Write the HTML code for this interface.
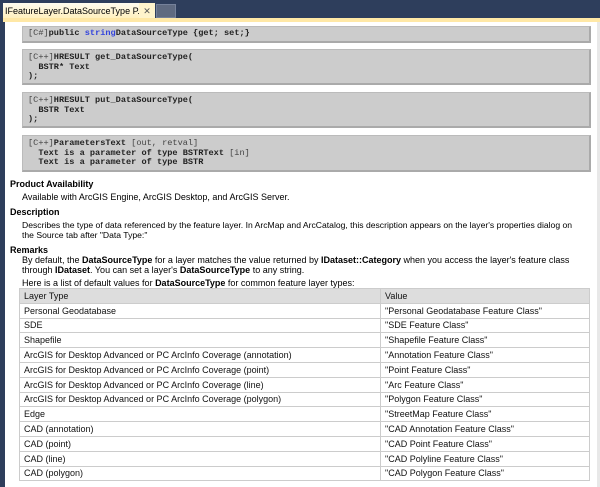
<!DOCTYPE html>
<html><head><style>
*{margin:0;padding:0;box-sizing:border-box}
body{width:600px;height:487px;background:#2e3e5c;position:relative;overflow:hidden;font-family:"Liberation Sans",sans-serif;font-size:9px;color:#000}
.tab{position:absolute;left:3px;top:3px;width:152px;height:17px;background:linear-gradient(#fffcef,#ffefb8);font-size:9px;line-height:17px;padding-left:2px;color:#000;white-space:nowrap;overflow:hidden}
.tab span{position:absolute;right:0;top:0;width:16px;text-align:center;color:#555;font-size:9px;background:#fff4cc}
.tab2{position:absolute;left:156px;top:4px;width:20px;height:14px;background:#5f6a80;border:1px solid #75819a}
.strip{position:absolute;left:3px;top:18px;width:597px;height:4px;background:#ffe8a6}
.page{position:absolute;left:5px;top:22px;width:592px;height:465px;background:#fff}
.sb{position:absolute;left:597px;top:22px;width:3px;height:465px;background:#e8e8e8}
.code{position:absolute;left:17px;width:569px;background:#cccccc;border-right:2px solid #aaa;border-bottom:2px solid #aaa;border-top:1px solid #bbb;border-left:1px solid #bbb;font-family:"Liberation Mono",monospace;font-size:8.6px;line-height:9.7px;padding:3px 5px;white-space:pre;color:#444}
.code b{color:#222}
.kw{color:#3344dd}
.h{position:absolute;left:5px;font-weight:bold;font-size:9px}
.t{position:absolute;left:17px;font-size:9px;line-height:10px;width:580px;white-space:nowrap}
table{position:absolute;left:14px;top:266px;width:571px;border-collapse:collapse;font-size:9px}
td{border:1px solid #ccc;height:14.8px;padding:0 4px;color:#111;white-space:nowrap}
tr:first-child td{background:#ddd}
</style></head><body>
<div class="tab">IFeatureLayer.DataSourceType P...<span>✕</span></div>
<div class="tab2"></div>
<div class="strip"></div>
<div class="page">
<div class="code" style="top:4px;height:17px;padding-top:2px">[C#]<b>public <span class="kw">string</span>DataSourceType {get; set;}</b></div>
<div class="code" style="top:27px;height:36px">[C++]<b>HRESULT get_DataSourceType(
  BSTR* Text
);</b></div>
<div class="code" style="top:70px;height:36px">[C++]<b>HRESULT put_DataSourceType(
  BSTR Text
);</b></div>
<div class="code" style="top:113px;height:37px">[C++]<b>ParametersText</b> [out, retval]
  <b>Text is a parameter of type BSTRText</b> [in]
  <b>Text is a parameter of type BSTR</b></div>
<div class="h" style="top:157px">Product Availability</div>
<div class="t" style="top:170px">Available with ArcGIS Engine, ArcGIS Desktop, and ArcGIS Server.</div>
<div class="h" style="top:185px">Description</div>
<div class="t" style="top:198px;font-size:8.6px">Describes the type of data referenced by the feature layer. In ArcMap and ArcCatalog, this description appears on the layer's properties dialog on<br>the Source tab after "Data Type:"</div>
<div class="h" style="top:223px">Remarks</div>
<div class="t" style="top:233px">By default, the <b>DataSourceType</b> for a layer matches the value returned by <b>IDataset::Category</b> when you access the layer's feature class<br>through <b>IDataset</b>. You can set a layer's <b>DataSourceType</b> to any string.</div>
<div class="t" style="top:256px">Here is a list of default values for <b>DataSourceType</b> for common feature layer types:</div>
<table>
<tr><td style="width:361px">Layer Type</td><td>Value</td></tr>
<tr><td>Personal Geodatabase</td><td>"Personal Geodatabase Feature Class"</td></tr>
<tr><td>SDE</td><td>"SDE Feature Class"</td></tr>
<tr><td>Shapefile</td><td>"Shapefile Feature Class"</td></tr>
<tr><td>ArcGIS for Desktop Advanced or PC ArcInfo Coverage (annotation)</td><td>"Annotation Feature Class"</td></tr>
<tr><td>ArcGIS for Desktop Advanced or PC ArcInfo Coverage (point)</td><td>"Point Feature Class"</td></tr>
<tr><td>ArcGIS for Desktop Advanced or PC ArcInfo Coverage (line)</td><td>"Arc Feature Class"</td></tr>
<tr><td>ArcGIS for Desktop Advanced or PC ArcInfo Coverage (polygon)</td><td>"Polygon Feature Class"</td></tr>
<tr><td>Edge</td><td>"StreetMap Feature Class"</td></tr>
<tr><td>CAD (annotation)</td><td>"CAD Annotation Feature Class"</td></tr>
<tr><td>CAD (point)</td><td>"CAD Point Feature Class"</td></tr>
<tr><td>CAD (line)</td><td>"CAD Polyline Feature Class"</td></tr>
<tr><td>CAD (polygon)</td><td>"CAD Polygon Feature Class"</td></tr>
</table>
</div>
<div class="sb"></div>
</body></html>
